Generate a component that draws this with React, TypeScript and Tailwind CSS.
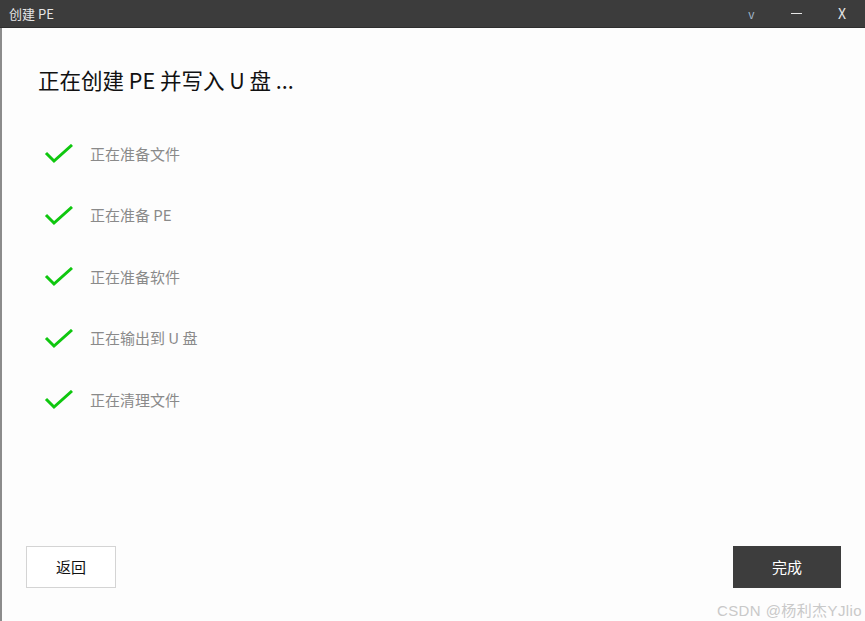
const steps = ["正在准备文件", "正在准备 PE", "正在准备软件", "正在输出到 U 盘", "正在清理文件"]

function Check() {
  return (
    <svg viewBox="0 0 30 20" className="w-[30px] h-[20px]" aria-hidden="true">
      <path d="M2 9 L10 17 L28 1" fill="none" stroke="#0fc70f" strokeWidth="3" />
    </svg>
  )
}

export default function App() {
  return (
    <div
      className="relative w-[865px] h-[621px] flex flex-col bg-[#fdfdfd] overflow-hidden"
      style={{ fontFamily: '"Noto Sans CJK SC", "Noto Sans", sans-serif' }}
    >
      {/* Title bar */}
      <div className="h-[28px] shrink-0 bg-[#3c3c3c] border-b border-[#2e2e2e] flex items-center text-[#e6e6e6]">
        <span className="pl-[9px] text-[13px] leading-none">创建 PE</span>
        <div className="ml-auto flex items-center h-full">
          <span className="w-[46px] pl-[3px] text-center text-[12px] text-[#9fb4c8]">v</span>
          <span className="w-[46px] flex justify-center">
            <span className="block w-[11px] h-[1px] bg-[#e6e6e6]" />
          </span>
          <span className="w-[46px] text-center text-[14px]">X</span>
        </div>
      </div>

      <div className="flex-1 flex border-l-2 border-[#8c8c8c]">
        <div className="flex-1 flex flex-col">
          <h1 className="pl-[36px] pt-[38px] text-[21.5px] leading-[28px] text-[#111]">
            正在创建 PE 并写入 U 盘 ...
          </h1>

          <ul className="mt-[49px] pl-[42px] flex flex-col gap-[39.5px]">
            {steps.map((s) => (
              <li key={s} className="flex items-center h-[22px]">
                <Check />
                <span className="ml-[16px] text-[15px] text-[#8a8a8a]">{s}</span>
              </li>
            ))}
          </ul>

          <div className="mt-auto mb-[33px] px-[24px] flex items-center justify-between">
            <button className="w-[90px] h-[42px] border border-[#d4d4d4] bg-white text-[15px] text-[#111]">
              返回
            </button>
            <button className="w-[108px] h-[42px] bg-[#3d3d3d] text-[15px] text-white">
              完成
            </button>
          </div>
        </div>
      </div>

      {/* Watermark */}
      <div
        className="absolute right-[3px] bottom-[3px] text-[15px] tracking-[0.4px] text-[#c9c9c9] leading-none"
        style={{ fontFamily: '"Liberation Sans", "Noto Sans CJK SC", sans-serif' }}
      >
        CSDN @杨利杰YJlio
      </div>
    </div>
  )
}
